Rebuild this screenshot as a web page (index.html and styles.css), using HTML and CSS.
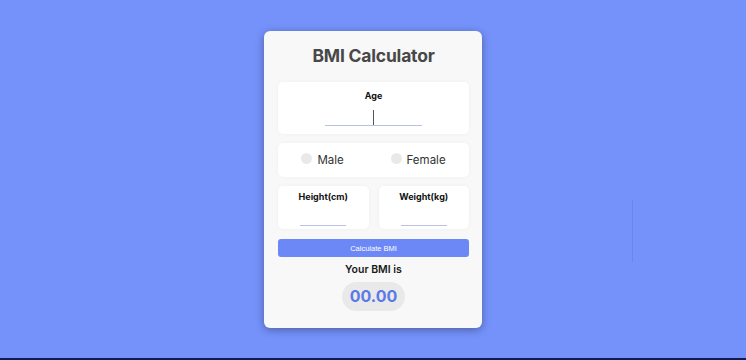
FILE: index.html
```html
<!DOCTYPE html>
<html lang="en">
<head>
<meta charset="utf-8">
<title>BMI Calculator</title>
<link rel="stylesheet" href="styles.css">
</head>
<body>
<div class="page">
  <div class="card">
    <h1 class="title">BMI Calculator</h1>
    <div class="box age-box">
      <label class="label">Age</label>
      <div class="field field-wide"><span class="caret"></span></div>
    </div>
    <div class="box gender-box">
      <div class="radio"><span class="dot"></span><span>Male</span></div>
      <div class="radio"><span class="dot"></span><span>Female</span></div>
    </div>
    <div class="row">
      <div class="box small-box">
        <label class="label">Height(cm)</label>
        <div class="field field-narrow"></div>
      </div>
      <div class="box small-box">
        <label class="label">Weight(kg)</label>
        <div class="field field-narrow"></div>
      </div>
    </div>
    <button class="btn">Calculate BMI</button>
    <div class="result-title">Your BMI is</div>
    <div class="pill">00.00</div>
  </div>
  <div class="artifact"></div>
</div>
</body>
</html>
```
FILE: styles.css
```css
html { background: #101a55; margin: 0; padding: 0; }
body {
  margin: 0;
  height: 358px;
  background: #7592fb;
  font-family: Inter, "Open Sans", sans-serif;
  overflow: hidden;
}
.page {
  position: relative;
  height: 358px;
  display: flex;
  align-items: center;
  justify-content: center;
}
.card {
  width: 218px;
  height: 297px;
  box-sizing: border-box;
  margin-top: 1px;
  padding: 0 13px 0 14px;
  background: #f8f8f8;
  border-radius: 6px;
  box-shadow: 0 2px 8px rgba(0,0,0,0.35);
  display: flex;
  flex-direction: column;
  align-items: stretch;
}
.title {
  margin: 14px 0 0;
  height: 22px;
  line-height: 22px;
  text-align: center;
  font-size: 17.5px;
  font-weight: 700;
  color: #484848;
  letter-spacing: -0.2px;
}
.box {
  background: #ffffff;
  border-radius: 5px;
  box-shadow: 0 0 4px rgba(0,0,0,0.04);
}
.age-box {
  margin-top: 15px;
  height: 52px;
  display: flex;
  flex-direction: column;
  align-items: center;
}
.label {
  display: block;
  margin-top: 8px;
  font-size: 9px;
  font-weight: 700;
  color: #111;
  line-height: 11px;
}
.field {
  border-bottom: 1px solid #b7c2e6;
  position: relative;
}
.field-wide {
  width: 97px;
  height: 16px;
  margin-top: 8px;
  display: flex;
  justify-content: center;
}
.caret {
  width: 1px;
  height: 15px;
  margin-top: 1px;
  background: #555;
}
.gender-box {
  margin-top: 9px;
  height: 34px;
  display: flex;
  align-items: center;
  justify-content: space-around;
  padding: 0;
}
.radio {
  display: flex;
  align-items: center;
  gap: 5px;
  font-size: 11.5px;
  color: #333;
  font-weight: 400;
}
.dot {
  width: 11px;
  height: 11px;
  border-radius: 50%;
  background: #e9e9e9;
  margin-top: -4px;
}
.row {
  margin-top: 9px;
  display: flex;
  gap: 10px;
}
.small-box {
  flex: 1;
  height: 43px;
  display: flex;
  flex-direction: column;
  align-items: center;
}
.small-box .label { margin-top: 5px; }
.field-narrow {
  width: 46px;
  height: 12px;
  margin-top: 11px;
}
.btn {
  margin-top: 10px;
  height: 18px;
  border: none;
  border-radius: 3px;
  background: #6b88f6;
  color: #fff;
  font-family: "Liberation Sans", Arial, sans-serif;
  font-size: 7.5px;
  padding: 0;
}
.result-title {
  margin-top: 6px;
  text-align: center;
  font-size: 10.5px;
  font-weight: 600;
  color: #1a1a1a;
  line-height: 13px;
}
.pill {
  margin: 6px auto 0;
  width: 63px;
  height: 29px;
  line-height: 29px;
  border-radius: 15px;
  background: #e9e9e9;
  text-align: center;
  color: #5b7ae6;
  font-size: 16px;
  font-weight: 700;
}
.artifact {
  position: absolute;
  left: 632px;
  top: 200px;
  width: 1px;
  height: 62px;
  background: rgba(90,110,210,0.35);
}
```
